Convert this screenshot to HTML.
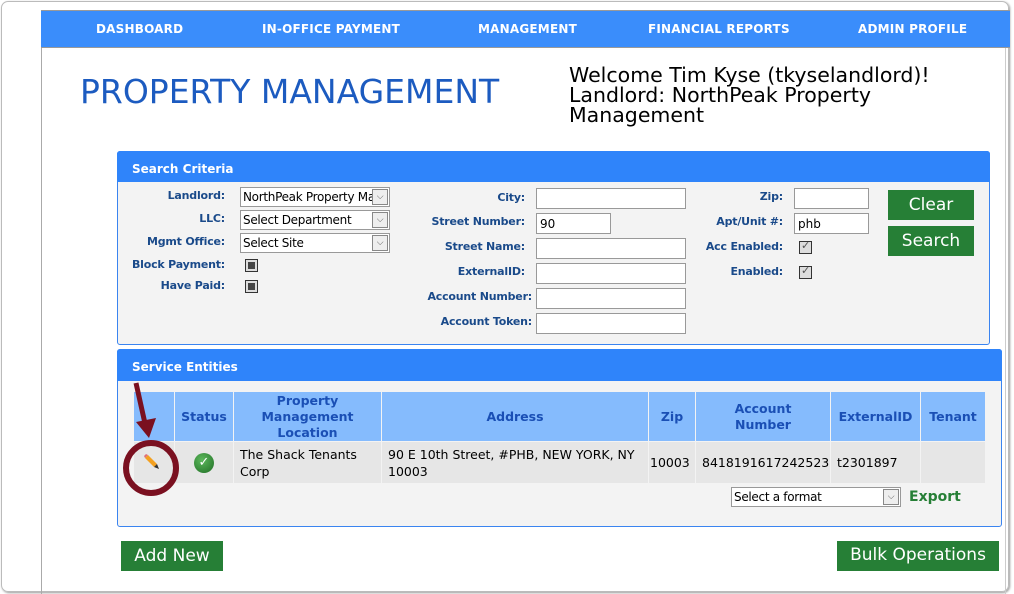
<!DOCTYPE html>
<html><head><meta charset="utf-8">
<style>
*{box-sizing:border-box}
body{margin:0;width:1014px;height:594px;background:#fff;font-family:Verdana,"DejaVu Sans",sans-serif;position:relative;overflow:hidden}
.a{position:absolute}
.frame{left:1px;top:1px;width:1008px;height:591px;border:1px solid #bbb;border-radius:7px;box-shadow:1px 1px 2px #999}
.nav{left:41px;top:10px;width:969px;height:38px;background:#3a8dfb;border-top:1px solid #999;border-bottom:1px solid #999}
.nav span{position:absolute;top:11px;color:#fff;font-weight:bold;font-size:12px;font-family:"DejaVu Sans",sans-serif;letter-spacing:0.2px}
.lbl{color:#1a4a8a;font-weight:bold;font-size:11px;text-align:right;font-family:"DejaVu Sans",sans-serif;letter-spacing:-0.2px}
.inp{background:#fff;border:1px solid #999;height:21px;font-size:12px;padding:3px 0 0 3px;font-family:"DejaVu Sans",sans-serif}
.sel{background:#fff;border:1px solid #999;height:20px;font-size:12px;padding:2px 0 0 2px;overflow:hidden;white-space:nowrap;font-family:"DejaVu Sans",sans-serif;letter-spacing:-0.3px}
.sel i{position:absolute;right:1px;top:1px;width:16px;height:16px;border:1px solid #888;background:#eee;font-style:normal;font-size:9px;text-align:center;line-height:14px;color:#555}
.cb{width:13px;height:13px;border:1px solid #333;background:#ddd}
.cb.f::after{content:"";position:absolute;left:2px;top:2px;width:7px;height:7px;background:#444}
.cb.c::after{content:"✓";position:absolute;left:1px;top:-3px;font-size:11px;color:#555}
.btn{background:#267f36;color:#fff;font-size:17px;text-align:center;font-family:"DejaVu Sans",sans-serif}
.th{background:#85bbfd;color:#1a4fb5;font-weight:bold;font-size:12.5px;text-align:center;display:flex;align-items:center;justify-content:center;line-height:16px;font-family:"DejaVu Sans",sans-serif}
.td{background:#e6e6e6;font-size:12.5px;color:#000;padding:4px 6px;line-height:17px;font-family:"DejaVu Sans",sans-serif}
</style></head><body>
<div class="a frame"></div>
<div class="a" style="left:41px;top:10px;width:1px;height:584px;background:#aaa"></div>
<div class="a" style="left:1005px;top:48px;width:1px;height:546px;background:#ccc"></div>
<div class="a nav">
<span style="left:55px">DASHBOARD</span>
<span style="left:221px">IN-OFFICE PAYMENT</span>
<span style="left:437px">MANAGEMENT</span>
<span style="left:607px">FINANCIAL REPORTS</span>
<span style="left:817px">ADMIN PROFILE</span>
</div>
<div class="a" style="left:80px;top:72px;font-size:33px;color:#1c5bc0;font-family:'DejaVu Sans',sans-serif">PROPERTY MANAGEMENT</div>
<div class="a" style="left:569px;top:65px;font-size:20.5px;line-height:20px;color:#000;font-family:'DejaVu Sans',sans-serif">Welcome Tim Kyse (tkyselandlord)!<br>Landlord: NorthPeak Property<br>Management</div>

<!-- search panel -->
<div class="a" style="left:117px;top:151px;width:873px;height:194px;background:#f3f3f3;border:1px solid #3a84f0;border-radius:3px"></div>
<div class="a" style="left:117px;top:151px;width:873px;height:31px;background:#2f84fa;border-radius:3px 3px 0 0"></div>
<div class="a" style="left:132px;top:162px;color:#fff;font-weight:bold;font-size:12px;font-family:'DejaVu Sans',sans-serif">Search Criteria</div>

<div class="a lbl" style="left:120px;top:189px;width:105px">Landlord:</div>
<div class="a lbl" style="left:120px;top:212px;width:105px">LLC:</div>
<div class="a lbl" style="left:120px;top:235px;width:105px">Mgmt Office:</div>
<div class="a lbl" style="left:120px;top:258px;width:105px">Block Payment:</div>
<div class="a lbl" style="left:120px;top:279px;width:105px">Have Paid:</div>
<div class="a sel" style="left:240px;top:187px;width:150px">NorthPeak Property Mar<i>⌵</i></div>
<div class="a sel" style="left:240px;top:210px;width:150px">Select Department<i>⌵</i></div>
<div class="a sel" style="left:240px;top:233px;width:150px">Select Site<i>⌵</i></div>
<div class="a cb f" style="left:245px;top:259px"></div>
<div class="a cb f" style="left:245px;top:280px"></div>

<div class="a lbl" style="left:400px;top:191px;width:125px">City:</div>
<div class="a lbl" style="left:400px;top:215px;width:125px">Street Number:</div>
<div class="a lbl" style="left:400px;top:240px;width:125px">Street Name:</div>
<div class="a lbl" style="left:400px;top:265px;width:125px">ExternalID:</div>
<div class="a lbl" style="left:400px;top:290px;width:132px">Account Number:</div>
<div class="a lbl" style="left:400px;top:315px;width:132px">Account Token:</div>
<div class="a inp" style="left:536px;top:188px;width:150px"></div>
<div class="a inp" style="left:536px;top:213px;width:75px">90</div>
<div class="a inp" style="left:536px;top:238px;width:150px"></div>
<div class="a inp" style="left:536px;top:263px;width:150px"></div>
<div class="a inp" style="left:536px;top:288px;width:150px"></div>
<div class="a inp" style="left:536px;top:313px;width:150px"></div>

<div class="a lbl" style="left:680px;top:190px;width:103px">Zip:</div>
<div class="a lbl" style="left:680px;top:215px;width:103px">Apt/Unit #:</div>
<div class="a lbl" style="left:680px;top:240px;width:103px">Acc Enabled:</div>
<div class="a lbl" style="left:680px;top:265px;width:103px">Enabled:</div>
<div class="a inp" style="left:794px;top:188px;width:75px"></div>
<div class="a inp" style="left:794px;top:213px;width:75px">phb</div>
<div class="a cb c" style="left:799px;top:241px"></div>
<div class="a cb c" style="left:799px;top:266px"></div>
<div class="a btn" style="left:888px;top:190px;width:86px;height:30px;line-height:30px">Clear</div>
<div class="a btn" style="left:888px;top:226px;width:86px;height:30px;line-height:30px">Search</div>

<!-- service panel -->
<div class="a" style="left:117px;top:349px;width:885px;height:178px;background:#f3f3f3;border:1px solid #3a84f0;border-radius:3px"></div>
<div class="a" style="left:117px;top:349px;width:885px;height:32px;background:#2f84fa;border-radius:3px 3px 0 0"></div>
<div class="a" style="left:132px;top:360px;color:#fff;font-weight:bold;font-size:12px;font-family:'DejaVu Sans',sans-serif">Service Entities</div>

<div class="a th" style="left:134px;top:392px;width:40px;height:49px"></div>
<div class="a th" style="left:175px;top:392px;width:58px;height:49px">Status</div>
<div class="a th" style="left:234px;top:392px;width:147px;height:49px">Property<br>Management<br>Location</div>
<div class="a th" style="left:382px;top:392px;width:266px;height:49px">Address</div>
<div class="a th" style="left:649px;top:392px;width:46px;height:49px">Zip</div>
<div class="a th" style="left:696px;top:392px;width:134px;height:49px">Account<br>Number</div>
<div class="a th" style="left:831px;top:392px;width:89px;height:49px">ExternalID</div>
<div class="a th" style="left:921px;top:392px;width:64px;height:49px">Tenant</div>

<div class="a td" style="left:134px;top:442px;width:40px;height:41px"></div>
<div class="a td" style="left:175px;top:442px;width:58px;height:41px"></div>
<div class="a td" style="left:234px;top:442px;width:147px;height:41px">The Shack Tenants Corp</div>
<div class="a td" style="left:382px;top:442px;width:266px;height:41px">90 E 10th Street, #PHB, NEW YORK, NY 10003</div>
<div class="a td" style="left:649px;top:442px;width:46px;height:41px;padding:12px 0 0 1px">10003</div>
<div class="a td" style="left:696px;top:442px;width:134px;height:41px;padding-top:12px">8418191617242523</div>
<div class="a td" style="left:831px;top:442px;width:89px;height:41px;padding-top:12px">t2301897</div>
<div class="a td" style="left:921px;top:442px;width:64px;height:41px"></div>

<div class="a" style="left:194px;top:453px;width:20px;height:20px;border-radius:50%;background:radial-gradient(circle at 40% 35%,#5cb85c,#1f6d24);color:#fff;font-size:13px;text-align:center;line-height:20px;font-weight:bold">✓</div>
<svg class="a" style="left:118px;top:380px" width="70" height="120" viewBox="0 0 70 120">
<path d="M18 3 L28 48" stroke="#7a1020" stroke-width="5" fill="none"/>
<path d="M18 42 L31 58 L38 38 Z" fill="#7a1020"/>
<circle cx="33" cy="88" r="25" stroke="#7a1020" stroke-width="6" fill="none"/>
<path d="M27 78 L36 87 L39 84 L30 75 Z" fill="#f3a020"/>
<path d="M36 87 L39 84 L41 89 Z" fill="#333"/>
<path d="M27 78 L30 75 L28 74 L26 76 Z" fill="#e0707a"/>
</svg>

<div class="a sel" style="left:731px;top:487px;width:170px">Select a format<i>⌵</i></div>
<div class="a" style="left:909px;top:489px;color:#267f36;font-weight:bold;font-size:14px;font-family:'DejaVu Sans',sans-serif">Export</div>

<div class="a btn" style="left:121px;top:541px;width:102px;height:30px;line-height:30px">Add New</div>
<div class="a btn" style="left:837px;top:541px;width:162px;height:30px;line-height:28px">Bulk Operations</div>
</body></html>
